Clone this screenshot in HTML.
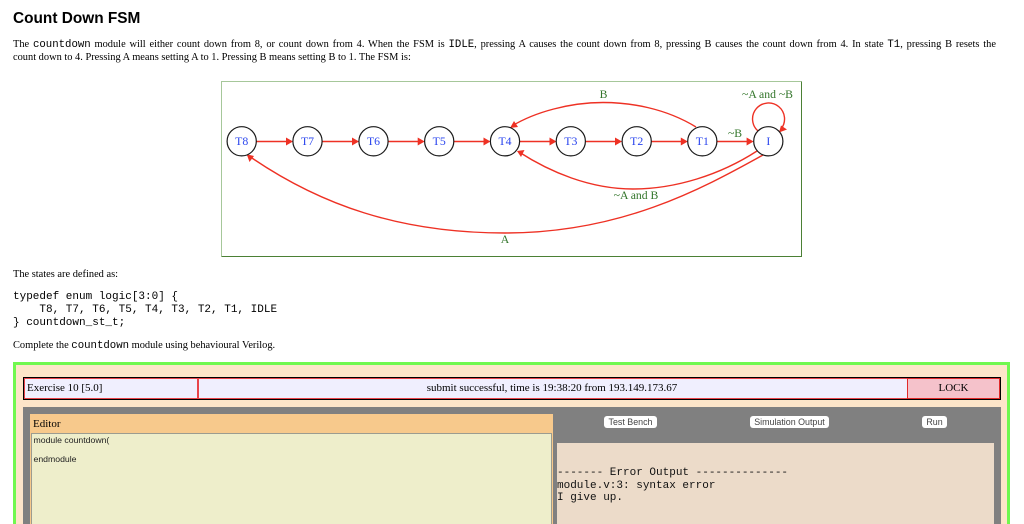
<!DOCTYPE html>
<html><head><meta charset="utf-8"><style>
html,body{margin:0;padding:0;background:#fff;width:1024px;height:524px;overflow:hidden}
body{position:relative;font-family:"Liberation Serif",serif;color:#000;filter:blur(.25px)}
.a{position:absolute;white-space:pre}
h1{position:absolute;margin:0;left:13px;top:10px;font:bold 15.4px/18px "Liberation Sans",sans-serif;color:#000}
.p{font-size:10.4px;line-height:13px}
tt,.m{font-family:"Liberation Mono",monospace}
tt{font-size:10.7px}
.btn{position:absolute;top:416px;height:12px;background:#fff;border-radius:3px;font:8.9px/12px "Liberation Sans",sans-serif;text-align:center;color:#444}
.box{position:absolute;box-sizing:border-box}
</style></head><body>
<h1>Count Down FSM</h1>
<div class="a p" style="left:13px;top:38px;width:983px;white-space:normal;text-align:justify;text-align-last:justify">The <tt>countdown</tt> module will either count down from 8, or count down from 4. When the FSM is <tt>IDLE</tt>, pressing A causes the count down from 8, pressing B causes the count down from 4. In state <tt>T1</tt>, pressing B resets the</div>
<div class="a p" style="left:13px;top:51px">count down to 4. Pressing A means setting A to 1. Pressing B means setting B to 1. The FSM is:</div>
<svg class="a" style="left:0;top:0" width="1024" height="270" viewBox="0 0 1024 270">
<path d="M221.5 256.5V81.5H801.5" fill="none" stroke="#a6c79a" stroke-width="1"/>
<path d="M801.5 81.5V256.5H221.500" fill="none" stroke="#4b8035" stroke-width="1"/>
<g fill="none" stroke="#ee3124" stroke-width="1.4">
<path d="M256 141.500H288M322 141.500H354M388 141.500H420M454 141.500H486M520 141.500H552M586 141.500H617M651 141.500H683M717 141.500H749"/>
<path d="M696 127C665 108 630 102.500 603 102.500C570 102.500 535 112 512 126"/>
<path d="M757 151C720 175 675 189 633 189C590 189 550 172 519 152"/>
<path d="M763 155C700 190 620 233 505 233C400 233 320 205 249 156"/>
<path d="M758 131A16 16 0 1 1 781 129"/>
</g>
<g fill="#ee3124">
<path d="M293 141.500L286 137.500L286 145.500ZM359 141.500L352 137.500L352 145.500ZM424.700 141.500L417.700 137.500L417.700 145.500ZM490.500 141.500L483.500 137.500L483.500 145.500ZM556.500 141.500L549.500 137.500L549.500 145.500ZM622 141.500L615 137.500L615 145.500ZM687.800 141.500L680.800 137.500L680.800 145.500ZM753.600 141.500L746.600 137.500L746.600 145.500Z"/>
<path d="M510 128L514 121L518 127Z"/>
<path d="M517 151L524.500 150L521 157Z"/>
<path d="M246.700 154.300L254 156L249.500 162Z"/>
<path d="M779 132.500L781 125.500L787 129.500Z"/>
</g>
<g fill="#fff" stroke="#1a1a1a" stroke-width="1.200">
<circle cx="241.700" cy="141.300" r="14.600"/><circle cx="307.500" cy="141.300" r="14.600"/><circle cx="373.500" cy="141.300" r="14.600"/><circle cx="439.200" cy="141.300" r="14.600"/><circle cx="505" cy="141.300" r="14.600"/><circle cx="570.800" cy="141.300" r="14.600"/><circle cx="636.700" cy="141.300" r="14.600"/><circle cx="702.300" cy="141.300" r="14.600"/><circle cx="768.300" cy="141.300" r="14.600"/>
</g>
<g font-family="Liberation Serif" font-size="11.800" fill="#2a45ee" text-anchor="middle">
<text x="241.700" y="145">T8</text><text x="307.500" y="145">T7</text><text x="373.500" y="145">T6</text><text x="439.200" y="145">T5</text><text x="505" y="145">T4</text><text x="570.800" y="145">T3</text><text x="636.700" y="145">T2</text><text x="702.300" y="145">T1</text><text x="768.300" y="145">I</text>
</g>
<g font-family="Liberation Serif" font-size="11.700" fill="#32752a" text-anchor="middle">
<text x="603.500" y="98">B</text><text x="767.500" y="98">~A and ~B</text><text x="735" y="137">~B</text><text x="636" y="199">~A and B</text><text x="505" y="243">A</text>
</g>
</svg>
<div class="a p" style="left:13px;top:267.500px">The states are defined as:</div>
<div class="a m" style="left:13px;top:291px;font-size:11px;line-height:13px;color:#000">typedef enum logic[3:0] {
    T8, T7, T6, T5, T4, T3, T2, T1, IDLE
} countdown_st_t;</div>
<div class="a p" style="left:13px;top:338.500px">Complete the <tt>countdown</tt> module using behavioural Verilog.</div>

<div class="box" style="left:13px;top:362px;width:997px;height:170px;background:#fde5c9;border:3px solid #70f84f"></div>
<div class="box" style="left:23px;top:377px;width:978px;height:23px;background:#000"></div>
<div class="box" style="left:24px;top:378px;width:976px;height:21px;background:#f0effe;border:1px solid #e8444a"></div>
<div class="box" style="left:197px;top:378px;width:2px;height:21px;background:#e8444a"></div>
<div class="box" style="left:907px;top:378px;width:93px;height:21px;background:#f5c2cb;border:1px solid #e02a2a"></div>
<div class="a" style="left:27px;top:382px;font-size:11px;line-height:13px">Exercise 10 [5.0]</div>
<div class="a" style="left:198px;width:708px;text-align:center;top:382px;font-size:11px;line-height:13px">submit successful, time is 19:38:20 from 193.149.173.67</div>
<div class="a" style="left:908px;width:91px;text-align:center;top:382px;font-size:11px;line-height:13px">LOCK</div>

<div class="box" style="left:23px;top:407px;width:978px;height:117px;background:#808080"></div>
<div class="box" style="left:30px;top:414px;width:523px;height:110px;background:#f7c98c"></div>
<div class="a" style="left:33px;top:418px;font-size:11px;line-height:13px">Editor</div>
<div class="box" style="left:31px;top:433px;width:521px;height:91px;background:#eeeecb;border:1px solid #9c9c90;border-bottom:0"></div>
<div class="a" style="left:33.500px;top:436px;font:8.700px/9.500px 'Liberation Sans',sans-serif;color:#222">module countdown(

endmodule</div>
<div class="btn" style="left:604px;width:53px">Test Bench</div>
<div class="btn" style="left:750px;width:79px">Simulation Output</div>
<div class="btn" style="left:922px;width:25px">Run</div>
<div class="box" style="left:557px;top:443px;width:437px;height:81px;background:#ecdbc9"></div>
<div class="a m" style="left:557px;top:467px;font-size:11px;line-height:12.500px;color:#111">------- Error Output --------------
module.v:3: syntax error
I give up.</div>
</body></html>
